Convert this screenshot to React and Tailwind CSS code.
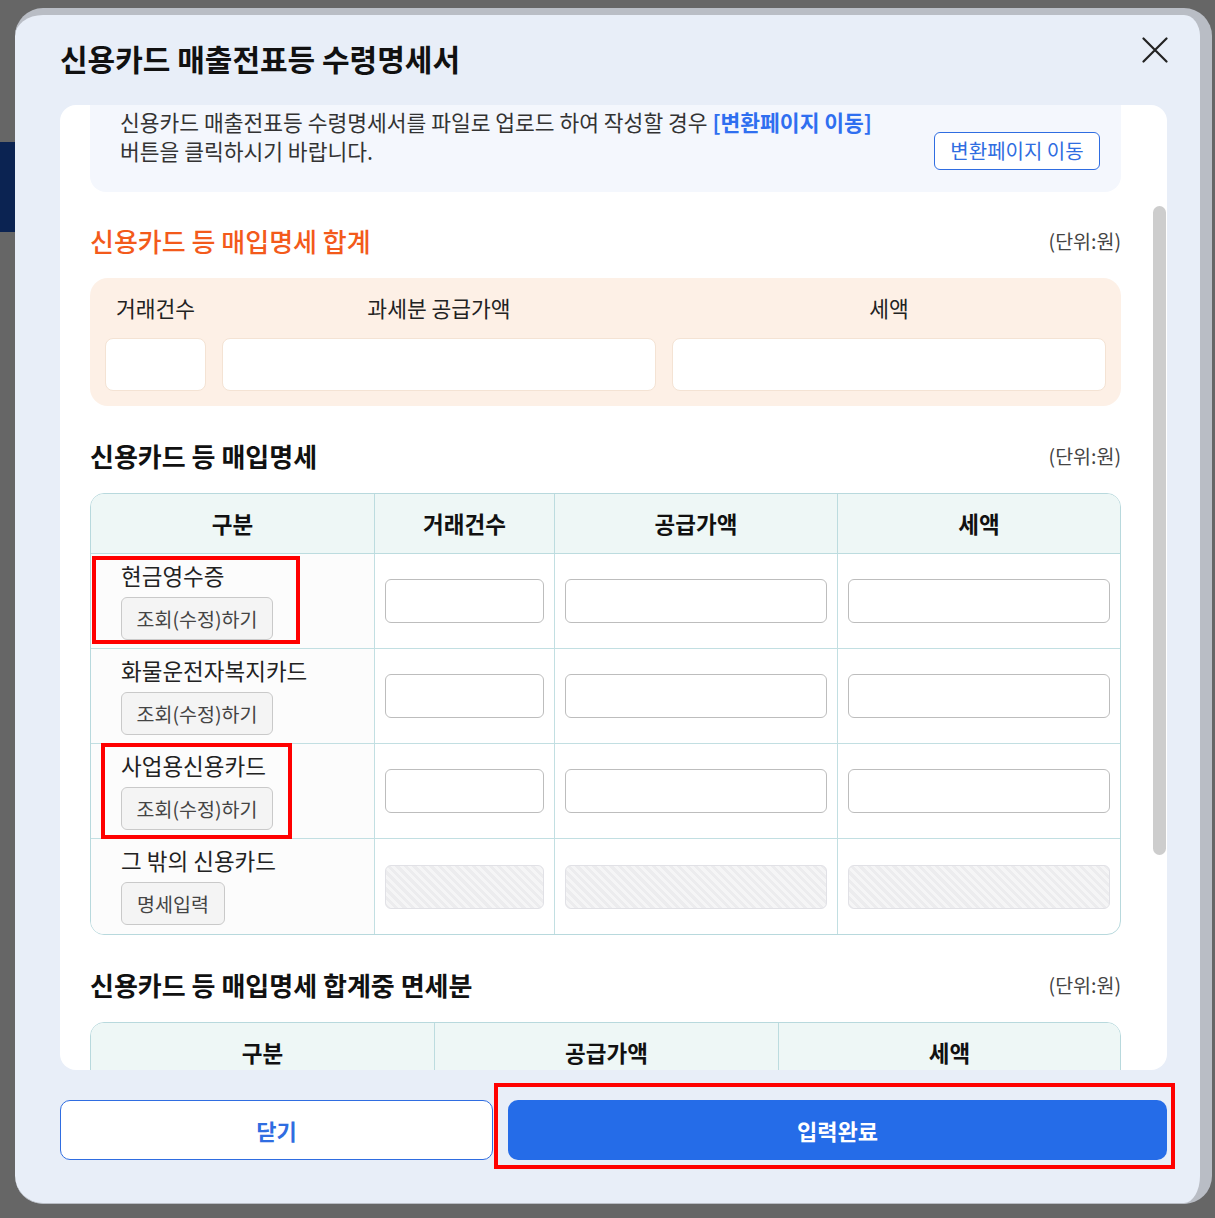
import { useLayoutEffect, useRef } from 'react';

const ROWS = [
  { label: '현금영수증', action: '조회(수정)하기', mark: 'a' },
  { label: '화물운전자복지카드', action: '조회(수정)하기' },
  { label: '사업용신용카드', action: '조회(수정)하기', mark: 'b' },
  { label: '그 밖의 신용카드', action: '명세입력', disabled: true },
];

function Field({ disabled }) {
  if (disabled) {
    return (
      <div className="h-[44px] w-full rounded-[6px] border border-[#e1e1e6] bg-[repeating-linear-gradient(45deg,#ececee_0px,#ececee_3px,#f5f5f6_3px,#f5f5f6_6px)]" />
    );
  }
  return <div className="h-[44px] w-full rounded-[6px] border border-[#bdbdbd] bg-white" />;
}

function SectionTitle({ children, accent }) {
  return (
    <div className="flex h-[34px] items-center justify-between">
      <h3 className={accent ? 'text-[26px] font-medium leading-[34px] text-[#f35a1b]' : 'text-[26px] font-bold leading-[34px] text-[#111]'}>
        {children}
      </h3>
      <span className="text-[19.5px] leading-[26px] text-[#444]">(단위:원)</span>
    </div>
  );
}

function HeadCell({ children, last }) {
  return (
    <div className={`flex h-[60px] items-center justify-center border-b border-[#bcdcdf] bg-[#eef7f6] text-[22.5px] font-bold text-[#111] ${last ? '' : 'border-r'}`}>
      {children}
    </div>
  );
}

export default function App() {
  const boxRef = useRef(null);
  const lineRef = useRef(null);

  // the modal is shown already scrolled a little, with the top of the notice hidden
  useLayoutEffect(() => {
    const box = boxRef.current;
    const line = lineRef.current;
    if (!box || !line) return;
    const d = line.getBoundingClientRect().top - box.getBoundingClientRect().top;
    box.scrollTop = d - 2;
  }, []);

  return (
    <div className="flex h-[1218px] w-full overflow-hidden bg-[#666666] font-['Noto_Sans_CJK_KR',sans-serif]">
      {/* dimmed page behind the modal */}
      <div className="w-[15px] shrink-0">
        <div className="h-[142px]" />
        <div className="h-[90px] bg-[#0b2352]" />
      </div>

      <div className="mt-[8px] flex h-[1196px] w-[1197px] shrink-0 flex-col rounded-[28px] border-t-[7px] border-r-[12px] border-b border-[#b9bdc5] bg-[#e8eef8] pl-[45px] pr-[33px]">
        {/* Header */}
        <div className="flex h-[90px] shrink-0 items-start justify-between">
          <h2 className="pt-[25px] text-[30px] font-bold leading-[36px] text-[#111]">신용카드 매출전표등 수령명세서</h2>
          <button className="mt-[22px] -mr-[1px] text-[#222]">
            <svg width="26" height="26" viewBox="0 0 26 26" fill="none" stroke="currentColor" strokeWidth="2.2" strokeLinecap="round">
              <path d="M1.5 1.5L24.5 24.5M24.5 1.5L1.5 24.5" />
            </svg>
          </button>
        </div>

        {/* Scrolling body */}
        <div className="relative h-[965px] shrink-0 overflow-hidden rounded-[16px] bg-white">
          <div ref={boxRef} className="h-full overflow-y-auto pl-[30px] pr-[46px] pb-[60px] [scrollbar-width:none]">
            {/* Notice */}
            <div className="rounded-[16px] bg-[#f4f7fd] pl-[30px] pr-[21px] pt-[28px] pb-[22px]">
              <div className="flex items-end justify-between">
                <div className="mb-[5px]">
                  <p ref={lineRef} className="text-[21.5px] leading-[29px] text-[#333]">
                    신용카드 매출전표등 수령명세서를 파일로 업로드 하여 작성할 경우{' '}
                    <span className="font-bold text-[#2f6ff0]">[변환페이지 이동]</span>
                  </p>
                  <p className="text-[21.5px] leading-[29px] text-[#333]">버튼을 클릭하시기 바랍니다.</p>
                </div>
                <button className="h-[38px] w-[166px] rounded-[6px] border border-[#2f6de1] bg-white text-[20px] text-[#2f6de1]">
                  변환페이지 이동
                </button>
              </div>
            </div>

            {/* Summary */}
            <div className="mt-[32px]">
              <SectionTitle accent>신용카드 등 매입명세 합계</SectionTitle>
            </div>
            <div className="mt-[20px] grid grid-cols-[101px_1fr_1fr] gap-x-[16px] rounded-[18px] bg-[#fdf0e6] px-[15px] pt-[18px] pb-[15px]">
              {['거래건수', '과세분 공급가액', '세액'].map((t) => (
                <div key={t} className="flex flex-col items-center">
                  <span className="whitespace-nowrap text-[21.5px] leading-[24px] text-[#222]">{t}</span>
                  <div className="mt-[18px] h-[53px] w-full rounded-[8px] border border-[#f4e3d4] bg-white" />
                </div>
              ))}
            </div>

            {/* Detail */}
            <div className="mt-[33px]">
              <SectionTitle>신용카드 등 매입명세</SectionTitle>
            </div>
            <div className="mt-[20px] overflow-hidden rounded-[14px] border border-[#b8d9dd]">
              <div className="grid grid-cols-[284px_180px_283px_1fr]">
                <HeadCell>구분</HeadCell>
                <HeadCell>거래건수</HeadCell>
                <HeadCell>공급가액</HeadCell>
                <HeadCell last>세액</HeadCell>
                {ROWS.map((r, i) => {
                  const rowBorder = i < ROWS.length - 1 ? 'border-b' : '';
                  return [
                    <div key={r.label} className={`relative h-[95px] border-r border-[#c2dfe2] bg-[#fcfcfc] pl-[30px] pt-[7px] ${rowBorder}`}>
                      <p className="whitespace-nowrap text-[22.5px] leading-[28px] text-[#222]">{r.label}</p>
                      <button
                        className={`mt-[8px] h-[43px] rounded-[6px] border border-[#c9c9c9] bg-[#f4f4f4] text-[19.5px] text-[#444] ${r.disabled ? 'w-[104px]' : 'w-[152px]'}`}
                      >
                        {r.action}
                      </button>
                      {r.mark === 'a' && (
                        <div className="pointer-events-none absolute left-[1px] top-[2px] z-10 h-[88px] w-[208px] border-[4px] border-[#ff0000]" />
                      )}
                      {r.mark === 'b' && (
                        <div className="pointer-events-none absolute left-[10px] top-[-1px] z-10 h-[96px] w-[191px] border-[4px] border-[#ff0000]" />
                      )}
                    </div>,
                    <div key={r.label + '-n'} className={`flex items-center border-r border-[#c2dfe2] px-[10px] ${rowBorder}`}>
                      <Field disabled={r.disabled} />
                    </div>,
                    <div key={r.label + '-s'} className={`flex items-center border-r border-[#c2dfe2] px-[10px] ${rowBorder}`}>
                      <Field disabled={r.disabled} />
                    </div>,
                    <div key={r.label + '-t'} className={`flex items-center border-[#c2dfe2] px-[10px] ${rowBorder}`}>
                      <Field disabled={r.disabled} />
                    </div>,
                  ];
                })}
              </div>
            </div>

            {/* Exempt part */}
            <div className="mt-[33px]">
              <SectionTitle>신용카드 등 매입명세 합계중 면세분</SectionTitle>
            </div>
            <div className="mt-[20px] overflow-hidden rounded-[14px] border border-[#b8d9dd]">
              <div className="grid grid-cols-[344px_344px_1fr]">
                <HeadCell>구분</HeadCell>
                <HeadCell>공급가액</HeadCell>
                <HeadCell last>세액</HeadCell>
                <div className="flex h-[60px] items-center border-r border-[#c2dfe2] bg-[#fcfcfc] pl-[30px] text-[22.5px] text-[#222]">면세분 합계</div>
                <div className="flex items-center border-r border-[#c2dfe2] px-[10px]">
                  <div className="h-[40px] w-full rounded-[6px] border border-[#bdbdbd] bg-white" />
                </div>
                <div className="flex items-center px-[10px]">
                  <div className="h-[40px] w-full rounded-[6px] border border-[#bdbdbd] bg-white" />
                </div>
              </div>
            </div>
          </div>
          {/* scrollbar thumb */}
          <div className="pointer-events-none absolute right-[1px] top-[101px] h-[649px] w-[13px] rounded-full bg-[#cdcdcd]" />
        </div>

        {/* Footer */}
        <div className="mt-[30px] flex gap-[15px]">
          <button className="h-[60px] w-[433px] rounded-[10px] border border-[#2f6de1] bg-white text-[22px] font-semibold text-[#2f6de1]">
            닫기
          </button>
          <div className="relative flex-1">
            <button className="h-[60px] w-full rounded-[10px] bg-[#256ce8] text-[22px] font-semibold text-white">입력완료</button>
            <div className="pointer-events-none absolute left-[-14px] top-[-17px] h-[86px] w-[681px] border-[4px] border-[#ff0000]" />
          </div>
        </div>
      </div>
    </div>
  );
}
